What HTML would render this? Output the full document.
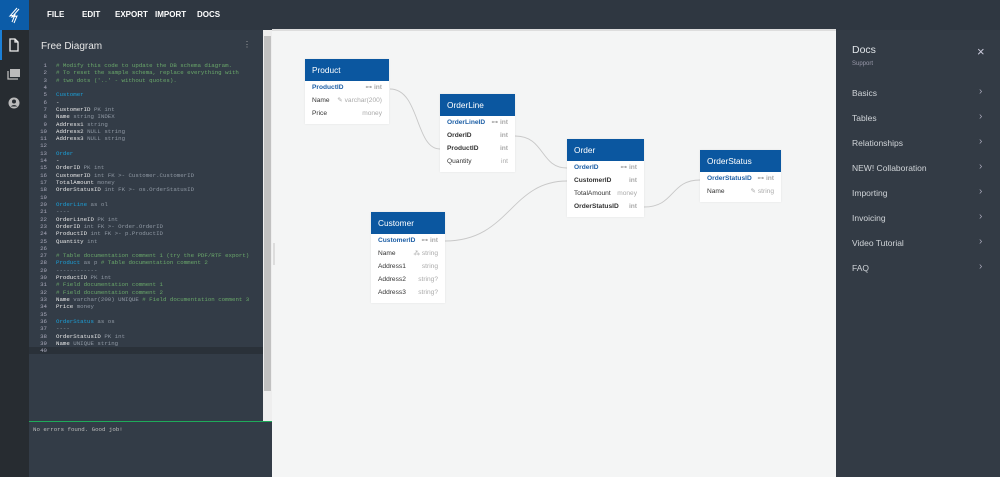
<!DOCTYPE html>
<html><head><meta charset="utf-8"><style>
*{margin:0;padding:0;box-sizing:border-box}
body{width:1000px;height:477px;overflow:hidden;background:#f4f5f5;font-family:"Liberation Sans",sans-serif;position:relative}
.abs{position:absolute}
#top{left:0;top:0;width:1000px;height:30px;background:#2f3741}
#logo{left:0;top:0;width:29px;height:30px;background:#0c5ca8}
#side{left:0;top:30px;width:29px;height:447px;background:#272c31}
.menu{top:10px;color:#fff;font-size:8px;font-weight:bold}
#ed{left:29px;top:30px;width:234px;height:392px;background:#333c47}
#sb{left:263px;top:30px;width:9px;height:392px;background:#eee}
#thumb{left:264px;top:36px;width:7px;height:355px;background:#c1c1c1}
#err{left:29px;top:421px;width:243px;height:56px;background:#333c47;border-top:1px solid #1faa5a}
.code{font-family:"Liberation Mono",monospace;font-size:5.75px;line-height:7.31px;white-space:pre;color:#e8e8e8}
.ln{left:29px;top:62px;width:18px;text-align:right;color:#aab}
.cd{left:56px;top:62px}
.c{color:#6aa86a}.k{color:#1ba0d8}.t{color:#8f98a3}
#docs{left:836px;top:30px;width:164px;height:447px;background:#333b45;color:#ccd}
.di{position:absolute;left:16px;font-size:8.5px;color:#d0d4d8}
.ar{position:absolute;left:143px;font-size:10px;color:#aab}
.tb{position:absolute;background:#fff;box-shadow:0 0 2px rgba(0,0,0,.08);font-size:6.6px}
.th{background:#0b57a0;color:#fff;font-size:8.3px;height:22px;line-height:22px;padding-left:7px}
.tr{height:13px;line-height:13px;padding:0 7px;position:relative;color:#333;margin-top:0}
.tr span{position:absolute;right:7px;color:#aaa}
.pk{color:#1d5fa6;font-weight:bold}
.b{font-weight:bold;color:#333}
</style></head><body>
<div class="abs" id="top"></div>
<div class="abs" id="logo"><svg width="29" height="30"><path d="M17 8 L10 16 L15 15 L12 22 M19 9 L12 17 L17 16 L14 23" stroke="#fff" stroke-width="1" fill="none"/></svg></div>
<div class="abs menu" style="left:47px">FILE</div>
<div class="abs menu" style="left:82px">EDIT</div>
<div class="abs menu" style="left:115px">EXPORT</div>
<div class="abs menu" style="left:155px">IMPORT</div>
<div class="abs menu" style="left:197px">DOCS</div>
<div class="abs" id="side"></div>
<div class="abs" style="left:0;top:30px;width:2px;height:30px;background:#1b7fd6"></div>
<svg class="abs" style="left:8px;top:38px" width="12" height="14"><path d="M2 1h5l3 3v9H2z M7 1v3h3" stroke="#eee" stroke-width="1.3" fill="none"/></svg>
<svg class="abs" style="left:7px;top:68px" width="14" height="12"><rect x="3" y="1" width="10" height="8" fill="#bbb"/><path d="M1 3v8h10" stroke="#bbb" stroke-width="1.3" fill="none"/></svg>
<svg class="abs" style="left:8px;top:97px" width="12" height="12"><circle cx="6" cy="6" r="5.5" fill="#bbb"/><circle cx="6" cy="4.5" r="2" fill="#272c31"/><path d="M2.5 9.5q3.5-3 7 0" fill="#272c31"/></svg>
<div class="abs" id="ed"></div>
<div class="abs" style="left:41px;top:41px;color:#e8e8e8;font-size:10px">Free Diagram</div>
<div class="abs" style="left:243px;top:40px;color:#aaa;font-size:8px">⋮</div>
<div class="abs" style="left:29px;top:347px;width:234px;height:7px;background:#2a3139"></div>
<div class="abs code ln">1
2
3
4
5
6
7
8
9
10
11
12
13
14
15
16
17
18
19
20
21
22
23
24
25
26
27
28
29
30
31
32
33
34
35
36
37
38
39
40</div>
<div class="abs code cd"><span class="c"># Modify this code to update the DB schema diagram.
# To reset the sample schema, replace everything with
# two dots ('..' - without quotes).</span>

<span class="k">Customer</span>
-
CustomerID <span class="t">PK int</span>
Name <span class="t">string INDEX</span>
Address1 <span class="t">string</span>
Address2 <span class="t">NULL string</span>
Address3 <span class="t">NULL string</span>

<span class="k">Order</span>
-
OrderID <span class="t">PK int</span>
CustomerID <span class="t">int FK &gt;- Customer.CustomerID</span>
TotalAmount <span class="t">money</span>
OrderStatusID <span class="t">int FK &gt;- os.OrderStatusID</span>

<span class="k">OrderLine</span> <span class="t">as ol</span>
<span class="t">----</span>
OrderLineID <span class="t">PK int</span>
OrderID <span class="t">int FK &gt;- Order.OrderID</span>
ProductID <span class="t">int FK &gt;- p.ProductID</span>
Quantity <span class="t">int</span>

<span class="c"># Table documentation comment 1 (try the PDF/RTF export)</span>
<span class="k">Product</span> <span class="t">as p</span> <span class="c"># Table documentation comment 2</span>
<span class="t">------------</span>
ProductID <span class="t">PK int</span>
<span class="c"># Field documentation comment 1
# Field documentation comment 2</span>
Name <span class="t">varchar(200) UNIQUE</span> <span class="c"># Field documentation comment 3</span>
Price <span class="t">money</span>

<span class="k">OrderStatus</span> <span class="t">as os</span>
<span class="t">----</span>
OrderStatusID <span class="t">PK int</span>
Name <span class="t">UNIQUE string</span>
</div>
<div class="abs" id="sb"></div>
<div class="abs" id="thumb"></div>
<div class="abs" id="err"><div class="code" style="position:absolute;left:4px;top:4px;color:#bbb">No errors found. Good job!</div></div>
<div class="abs" style="left:272px;top:29px;width:564px;height:2px;background:#ddd"></div>
<div class="abs" style="left:273px;top:243px;width:2px;height:22px;background:#ddd"></div>

<svg class="abs" style="left:0;top:0" width="1000" height="477"><g stroke="#c8c8c8" fill="none" stroke-width="0.9">
<path d="M390 89 C420 89 415 149 440 149"/>
<path d="M515 136 C545 136 540 168 567 168"/>
<path d="M445 241 C510 241 510 181 567 181"/>
<path d="M644 207 C675 207 670 180 700 180"/>
</g></svg>

<div class="tb" style="left:305px;top:59px;width:84px;height:65px"><div class="th">Product</div>
<div class="tr pk">ProductID<span>⊶ int</span></div><div class="tr">Name<span>✎ varchar(200)</span></div><div class="tr">Price<span>money</span></div></div>
<div class="tb" style="left:440px;top:94px;width:75px;height:78px"><div class="th">OrderLine</div>
<div class="tr pk">OrderLineID<span>⊶ int</span></div><div class="tr b">OrderID<span>int</span></div><div class="tr b">ProductID<span>int</span></div><div class="tr">Quantity<span>int</span></div></div>
<div class="tb" style="left:567px;top:139px;width:77px;height:78px"><div class="th">Order</div>
<div class="tr pk">OrderID<span>⊶ int</span></div><div class="tr b">CustomerID<span>int</span></div><div class="tr">TotalAmount<span>money</span></div><div class="tr b">OrderStatusID<span>int</span></div></div>
<div class="tb" style="left:371px;top:212px;width:74px;height:91px"><div class="th">Customer</div>
<div class="tr pk">CustomerID<span>⊶ int</span></div><div class="tr">Name<span>⁂ string</span></div><div class="tr">Address1<span>string</span></div><div class="tr">Address2<span>string?</span></div><div class="tr">Address3<span>string?</span></div></div>
<div class="tb" style="left:700px;top:150px;width:81px;height:52px"><div class="th">OrderStatus</div>
<div class="tr pk">OrderStatusID<span>⊶ int</span></div><div class="tr">Name<span>✎ string</span></div></div>

<div class="abs" id="docs">
<div style="position:absolute;left:16px;top:14px;font-size:10.5px;color:#e0e4e8">Docs</div>
<div style="position:absolute;left:16px;top:31px;font-size:6px;color:#99a">Support</div>
<div style="position:absolute;left:141px;top:14px;font-size:13px;color:#ccd">×</div>
<div class="di" style="top:58px">Basics</div><div class="ar" style="top:56px">›</div>
<div class="di" style="top:83px">Tables</div><div class="ar" style="top:81px">›</div>
<div class="di" style="top:108px">Relationships</div><div class="ar" style="top:106px">›</div>
<div class="di" style="top:133px">NEW! Collaboration</div><div class="ar" style="top:131px">›</div>
<div class="di" style="top:158px">Importing</div><div class="ar" style="top:156px">›</div>
<div class="di" style="top:183px">Invoicing</div><div class="ar" style="top:181px">›</div>
<div class="di" style="top:208px">Video Tutorial</div><div class="ar" style="top:206px">›</div>
<div class="di" style="top:233px">FAQ</div><div class="ar" style="top:231px">›</div>
</div>
</body></html>
